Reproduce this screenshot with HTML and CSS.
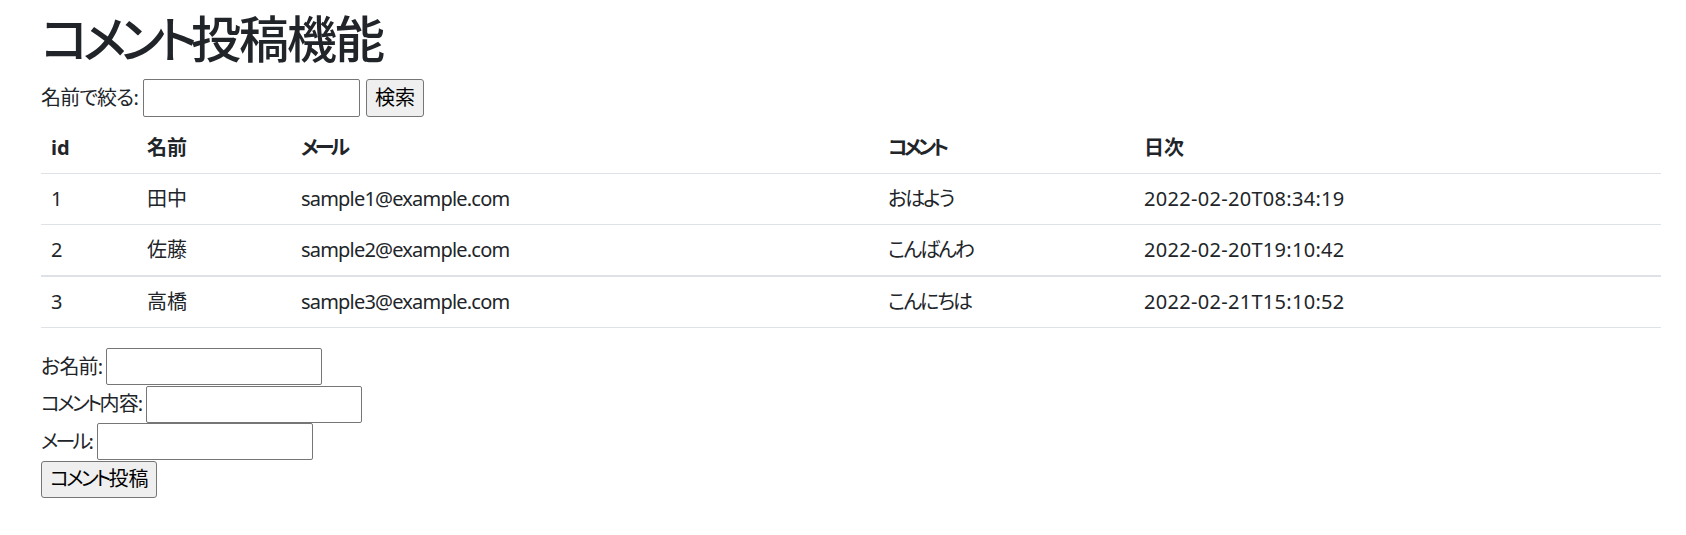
FILE: index.html
```html
<!DOCTYPE html>
<html lang="ja">
<head>
<meta charset="utf-8">
<title>コメント投稿機能</title>
<link rel="stylesheet" href="styles.css">
</head>
<body>
<div class="page">
  <h1 class="title"><span class="kana">コメント</span>投稿機能</h1>
  <form class="search">
    <label class="label" for="q">名前で絞る:</label>
    <input class="field field-search" id="q" type="text">
    <button class="btn" type="button">検索</button>
  </form>
  <table class="table">
    <colgroup>
      <col class="col-id">
      <col class="col-name">
      <col class="col-mail">
      <col class="col-comment">
      <col class="col-date">
    </colgroup>
    <thead>
      <tr><th>id</th><th>名前</th><th><span class="kana">メール</span></th><th><span class="kana">コメント</span></th><th>日次</th></tr>
    </thead>
    <tbody>
      <tr><td>1</td><td>田中</td><td>sample1@example.com</td><td>おはよう</td><td>2022-02-20T08:34:19</td></tr>
      <tr class="row-thick"><td>2</td><td>佐藤</td><td>sample2@example.com</td><td>こんばんわ</td><td>2022-02-20T19:10:42</td></tr>
      <tr><td>3</td><td>高橋</td><td>sample3@example.com</td><td>こんにちは</td><td>2022-02-21T15:10:52</td></tr>
    </tbody>
  </table>
  <form class="post">
    <div class="post-row">
      <label class="label" for="name">お名前:</label>
      <input class="field" id="name" type="text">
    </div>
    <div class="post-row">
      <label class="label" for="comment"><span class="kana">コメント</span>内容:</label>
      <input class="field" id="comment" type="text">
    </div>
    <div class="post-row">
      <label class="label" for="mail"><span class="kana">メール</span>:</label>
      <input class="field" id="mail" type="text">
    </div>
    <div class="post-row">
      <button class="btn" type="button"><span class="kana">コメント</span>投稿</button>
    </div>
  </form>
</div>
</body>
</html>
```

FILE: styles.css
```css
html, body {
  margin: 0;
  padding: 0;
  background: #ffffff;
}

body {
  font-family: "Noto Sans", "Noto Sans CJK JP", sans-serif;
  font-feature-settings: "palt";
  font-size: 20px;
  line-height: 30px;
  color: #212529;
}

.kana {
  letter-spacing: -0.14em;
}

.page {
  width: 1620px;
  padding: 9px 0 0 41px;
}

.title {
  margin: 0 0 10px 0;
  font-size: 50px;
  line-height: 60px;
  font-weight: 500;
  letter-spacing: -0.04em;
  color: #212529;
}

.title .kana {
  letter-spacing: -0.12em;
}

.search {
  display: flex;
  align-items: center;
  gap: 5px;
  height: 38px;
  margin: 0 0 6px 0;
}

.label {
  white-space: nowrap;
  letter-spacing: -0.04em;
}

.label .kana {
  letter-spacing: -0.14em;
}

.field {
  box-sizing: border-box;
  width: 216px;
  height: 37px;
  margin: 0;
  padding: 1px 2px;
  border: 1px solid #767676;
  border-radius: 2px;
  background: #ffffff;
  font: inherit;
}

.field-search {
  width: 217px;
  height: 38px;
}

.btn {
  box-sizing: border-box;
  height: 38px;
  margin: 0 0 0 1px;
  padding: 1px 8px;
  border: 1px solid #767676;
  border-radius: 3px;
  background: #efefef;
  color: #000000;
  font: inherit;
  font-size: 20px;
  line-height: 30px;
}

.table {
  width: 1620px;
  border-collapse: collapse;
  table-layout: fixed;
  margin: 0 0 20px 0;
}

.col-id { width: 96px; }
.col-name { width: 154px; }
.col-mail { width: 587px; }
.col-comment { width: 256px; }
.col-date { width: 527px; }

.table th,
.table td {
  padding: 10px;
  text-align: left;
  vertical-align: top;
  border-bottom: 1px solid #dee2e6;
  white-space: nowrap;
}

.table th {
  font-weight: 700;
}

.table th .kana {
  letter-spacing: -0.19em;
}

.table td:nth-child(3) {
  letter-spacing: -0.04em;
}

.table td:nth-child(4) {
  letter-spacing: -0.1em;
}

.table td:nth-child(5) {
  letter-spacing: 0.015em;
}

.table .row-thick td {
  border-bottom: 2px solid #dee2e6;
}

.post-row {
  display: flex;
  align-items: center;
  gap: 4px;
  height: 37.5px;
}

.post-row .btn {
  height: 37px;
  margin: 0;
}
```
